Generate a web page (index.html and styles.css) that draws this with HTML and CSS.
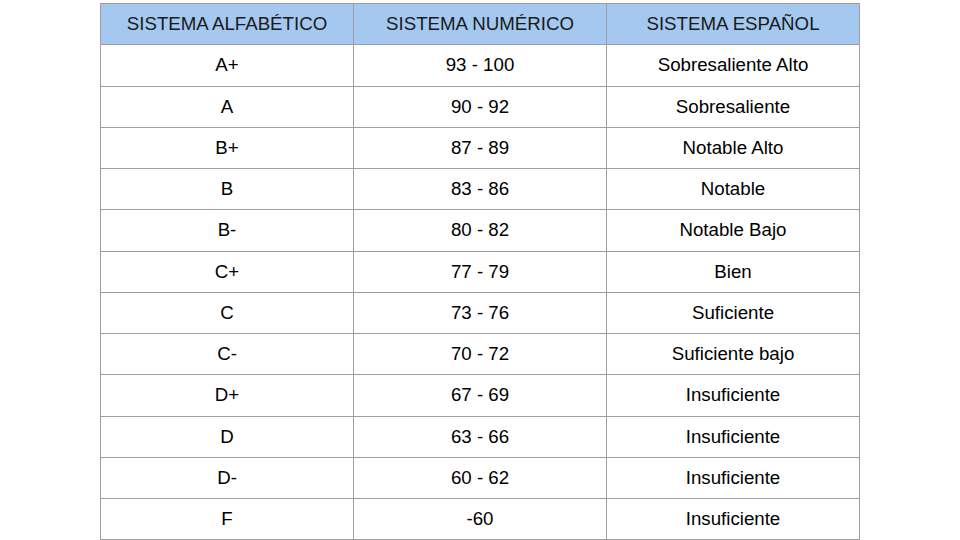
FILE: index.html
```html
<!DOCTYPE html>
<html lang="es">
<head>
<meta charset="utf-8">
<link rel="stylesheet" href="styles.css">
</head>
<body>
<div class="page">
<table class="grades">
<thead>
<tr><th>SISTEMA ALFABÉTICO</th><th>SISTEMA NUMÉRICO</th><th>SISTEMA ESPAÑOL</th></tr>
</thead>
<tbody>
<tr><td>A+</td><td>93 - 100</td><td>Sobresaliente Alto</td></tr>
<tr><td>A</td><td>90 - 92</td><td>Sobresaliente</td></tr>
<tr><td>B+</td><td>87 - 89</td><td>Notable Alto</td></tr>
<tr><td>B</td><td>83 - 86</td><td>Notable</td></tr>
<tr><td>B-</td><td>80 - 82</td><td>Notable Bajo</td></tr>
<tr><td>C+</td><td>77 - 79</td><td>Bien</td></tr>
<tr><td>C</td><td>73 - 76</td><td>Suficiente</td></tr>
<tr><td>C-</td><td>70 - 72</td><td>Suficiente bajo</td></tr>
<tr><td>D+</td><td>67 - 69</td><td>Insuficiente</td></tr>
<tr><td>D</td><td>63 - 66</td><td>Insuficiente</td></tr>
<tr><td>D-</td><td>60 - 62</td><td>Insuficiente</td></tr>
<tr><td>F</td><td>-60</td><td>Insuficiente</td></tr>
</tbody>
</table>
</div>
</body>
</html>
```
FILE: styles.css
```css
html, body {
  margin: 0;
  padding: 0;
  background: #ffffff;
}
.page {
  width: 960px;
  height: 540px;
  padding: 3px 0 0 100px;
  box-sizing: border-box;
}
.grades {
  border-collapse: collapse;
  width: 760px;
  table-layout: fixed;
  font-family: "Liberation Sans", Arial, sans-serif;
  font-size: 18.7px;
  color: #000000;
}
.grades tr {
  height: 41.25px;
}
.grades th,
.grades td {
  border: 1px solid #9e9e9e;
  text-align: center;
  vertical-align: middle;
  padding: 0;
  font-weight: normal;
  line-height: 20px;
}
.grades th {
  background: #a4c8ef;
  color: #1a1a1a;
}
```
